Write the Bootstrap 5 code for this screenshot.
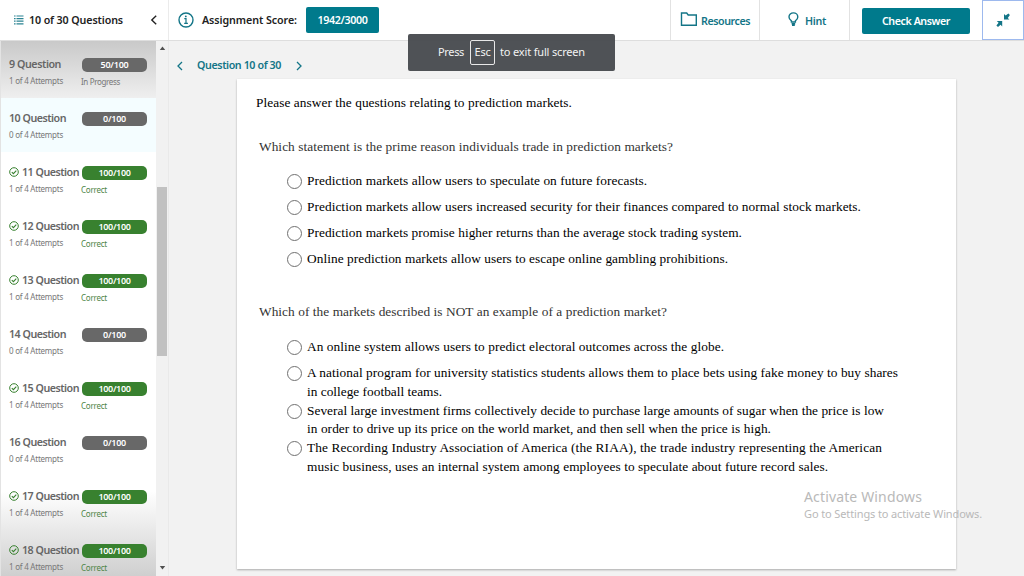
<!DOCTYPE html>
<html lang="en">

<head>
    <meta charset="UTF-8">
    <meta name="viewport" content="width=device-width, initial-scale=1.0">
    <title>Assignment</title>
    <link href="https://cdn.jsdelivr.net/npm/bootstrap@5.3.1/dist/css/bootstrap.min.css" rel="stylesheet">
    <style>
        :root {
            --teal: #007a8c;
        }

        body {
            height: 576px;
            font-family: "Noto Sans", "Open Sans", sans-serif;
            background-color: #f2f2f2;
            color: #222;
        }

        /* Top bar */
        .topbar {
            height: 41px;
            border-bottom: 1px solid #dedede;
            font-size: 10.7px;
            font-weight: 600;
            line-height: 16px;
        }

        .topbar > div {
            height: 40px;
        }

        .count-cell {
            width: 169px;
            padding-left: 14px;
            padding-right: 10px;
            border-right: 1px solid #ebebeb;
        }

        .count-text {
            margin-left: 5px;
        }

        .score-cell {
            padding-left: 9px;
        }

        .score-text {
            margin-left: 8px;
            width: 104px;
        }

        .score-box {
            width: 73px;
            height: 26px;
            line-height: 26px;
            border-radius: 2px;
            background-color: var(--teal);
        }

        .tool-cell {
            border-left: 1px solid #e2e2e2;
            color: #137587;
        }

        .tool-label {
            margin-top: 2px;
        }

        .resources-cell {
            width: 89px;
            padding-left: 9px;
        }

        .resources-cell .tool-label {
            margin-left: 3px;
        }

        .hint-cell {
            width: 90px;
            padding-left: 28px;
        }

        .hint-cell .tool-label {
            margin-left: 6px;
        }

        .check-cell {
            width: 133px;
            padding-left: 12px;
        }

        .btn-check-answer {
            width: 108px;
            height: 26px;
            padding: 0;
            margin-top: 2px;
            font-size: 10.7px;
            font-weight: 600;
            line-height: 26px;
            border: 0;
            border-radius: 2px;
            color: #fff;
            background-color: var(--teal);
        }

        .shrink-cell {
            width: 42px;
            border: 1px solid #9db9ee;
        }

        /* Question list */
        .side-panel {
            width: 169px;
            border-left: 1px solid #e3e3e3;
            border-right: 1px solid #e9e9e9;
        }

        .question-list {
            width: 155px;
            padding-top: 3px;
            background: linear-gradient(#c9c9c9, #efefef 57px, #fff 57px, #fff 450px, #cfcfcf);
        }

        .question-item {
            height: 54px;
            padding: 11px 9px 0 8px;
            flex-shrink: 0;
        }

        .question-item.active {
            background-color: #f4fdff;
        }

        .question-name {
            width: 73px;
            height: 18px;
            font-size: 10.7px;
            font-weight: 600;
            line-height: 19px;
            color: #666;
            white-space: nowrap;
        }

        .check-icon {
            margin: 0 3px 2px 0;
        }

        .score-pill {
            width: 65px;
            height: 14px;
            margin-top: 3px;
            border-radius: 5px;
            font-size: 9px;
            font-weight: 600;
            line-height: 14px;
            color: #fff;
            background-color: #686868;
        }

        .is-correct .score-pill {
            background-color: #38812f;
        }

        .question-note {
            font-size: 8px;
            line-height: 15px;
            color: #777;
        }

        .attempts {
            width: 72px;
        }

        .status-text {
            padding-top: 1px;
        }

        .is-correct .status-text {
            color: #4d8547;
        }

        .scroll-track {
            width: 12px;
            padding: 5px 1px 6px;
            background-color: #f1f1f1;
        }

        .scroll-thumb {
            width: 10px;
            height: 169px;
            margin-top: 137px;
            background-color: #c1c1c1;
        }

        /* Question area */
        .pager-row {
            height: 38px;
            padding: 11px 0 0 8px;
            font-size: 10.7px;
            font-weight: 600;
            color: #137587;
        }

        .pager-text {
            width: 84px;
            margin: 0 15px 0 14px;
            white-space: nowrap;
        }

        .sheet {
            width: 719px;
            height: 490px;
            margin-left: 68px;
            padding: 15px 19px;
            background-color: #fff;
            box-shadow: 0 1px 2px rgba(0, 0, 0, .3);
            font-family: "Liberation Serif", serif;
            font-size: 13.33px;
            line-height: 18.7px;
            color: #000;
        }

        .prompt {
            padding-left: 3px;
            color: #333;
        }

        .first-prompt {
            margin-top: 25px;
        }

        .second-prompt {
            margin-top: 27px;
        }

        .options {
            margin-top: 16px;
            padding-left: 31px;
        }

        .option {
            min-height: 26px;
        }

        .option .form-check-input {
            width: 15px;
            height: 15px;
            margin: 2px 5px 0 0;
            flex-shrink: 0;
            border: 1px solid #707070;
        }

        .option label {
            white-space: nowrap;
        }

        /* Overlays */
        .esc-toast {
            left: 408px;
            top: 34px;
            width: 207px;
            height: 37px;
            border-radius: 2px;
            background-color: rgba(70, 73, 77, .95);
            color: #f2f2f2;
            font-size: 11px;
            z-index: 5;
        }

        .esc-key {
            width: 25px;
            height: 25px;
            margin: 0 5px 0 6px;
            border: 1px solid #e8e8e8;
            border-radius: 2px;
            line-height: 22px;
        }

        .watermark {
            left: 804px;
            top: 487px;
            color: #b9b9b9;
            white-space: nowrap;
        }

        .watermark-title {
            font-size: 14px;
            line-height: 19px;
        }

        .watermark-text {
            font-size: 11px;
            line-height: 15px;
        }
    </style>
</head>

<body class="d-flex flex-column overflow-hidden position-relative">
    <header class="topbar d-flex bg-white flex-shrink-0">
        <div class="count-cell d-flex align-items-center">
            <svg width="10" height="10" viewBox="0 0 10 10" stroke="#2b8493" stroke-width="1.2">
                <path d="M0 1h1.6M0 3.6h1.6M0 6.2h1.6M0 8.8h1.6M2.5 1H9.5M2.5 3.6H9.5M2.5 6.2H9.5M2.5 8.8H9.5" />
            </svg>
            <span class="count-text text-nowrap"><span class="fit" data-width="94">10 of 30 Questions</span></span>
            <svg class="ms-auto" width="8" height="10" viewBox="0 0 8 10" fill="none" stroke="#222" stroke-width="1.4">
                <path d="M6.2 .8 1.8 5l4.4 4.2" />
            </svg>
        </div>
        <div class="score-cell d-flex align-items-center flex-grow-1">
            <svg width="16" height="16" viewBox="0 0 16 16" fill="none" stroke="#137587">
                <circle cx="8" cy="8" r="7" stroke-width="1.4" />
                <path d="M6.3 6.7H8v4.6M6.2 11.4h3.7" stroke-width="1.2" />
                <circle cx="7.8" cy="4.4" r=".9" fill="#137587" stroke="none" />
            </svg>
            <span class="score-text"><span class="fit" data-width="95">Assignment Score:</span></span>
            <div class="score-box text-white text-center"><span class="fit" data-width="50">1942/3000</span></div>
        </div>
        <div class="tool-cell resources-cell d-flex align-items-center">
            <svg width="18" height="16" viewBox="0 0 18 16" fill="none" stroke="#137587" stroke-width="1.4">
                <path d="M1.5 1h5.2l1.5 2h8.1v10.2H1.5z" />
            </svg>
            <span class="tool-label"><span class="fit" data-width="49">Resources</span></span>
        </div>
        <div class="tool-cell hint-cell d-flex align-items-center">
            <svg width="11" height="16" viewBox="0 0 11 16" fill="none" stroke="#137587" stroke-width="1.4">
                <path d="M3.4 10V8.8C1.9 7.8 1 6.7 1 5a4.4 4.1 0 0 1 8.8 0c0 1.7-.9 2.8-2.4 3.8V10zM3.6 11.7h3.6M4 13.3h2.8" />
            </svg>
            <span class="tool-label"><span class="fit" data-width="21">Hint</span></span>
        </div>
        <div class="tool-cell check-cell d-flex align-items-center">
            <button class="btn btn-check-answer"><span class="fit" data-width="68">Check Answer</span></button>
        </div>
        <div class="shrink-cell d-flex align-items-center justify-content-center">
            <svg width="14" height="14" viewBox="0 0 14 14" fill="#137587">
                <path d="M8 1v5.5h5.4L11.8 4.9 13.9 2 12.4.5 9.6 2.6zM.8 8h5.4v5.4L4.6 11.8 2 14 .4 12.4l2.2-2.6z" />
            </svg>
        </div>
    </header>

    <div class="d-flex flex-grow-1 overflow-hidden">
        <aside class="side-panel d-flex flex-shrink-0">
            <div class="question-list d-flex flex-column overflow-hidden" id="questionList">
                <!-- Questions will be added here by JavaScript -->
            </div>
            <div class="scroll-track d-flex flex-column align-items-center">
                <svg width="7" height="4" viewBox="0 0 7 4" fill="#505050"><path d="M.8 4 3.5.5 6.2 4z" /></svg>
                <div class="scroll-thumb"></div>
                <svg class="mt-auto" width="7" height="4" viewBox="0 0 7 4" fill="#505050"><path d="M.8 0 3.5 3.5 6.2 0z" /></svg>
            </div>
        </aside>

        <main class="flex-grow-1">
            <nav class="pager-row d-flex align-items-center">
                <svg width="6" height="10" viewBox="0 0 6 10" fill="none" stroke="#137587" stroke-width="1.3"><path d="M5 1 1 5l4 4" /></svg>
                <span class="pager-text"><span class="fit" data-width="84">Question 10 of 30</span></span>
                <svg width="6" height="10" viewBox="0 0 6 10" fill="none" stroke="#137587" stroke-width="1.3"><path d="m1 1 4 4-4 4" /></svg>
            </nav>
            <div class="sheet">
                <div><span class="fit" data-width="316">Please answer the questions relating to prediction markets.</span></div>

                <div class="prompt first-prompt"><span class="fit" data-width="414">Which statement is the prime reason individuals trade in prediction markets?</span></div>
                <div class="options">
                    <div class="option d-flex">
                        <input class="form-check-input" type="radio" name="q1" id="q1a">
                        <label for="q1a"><span class="fit" data-width="340">Prediction markets allow users to speculate on future forecasts.</span></label>
                    </div>
                    <div class="option d-flex">
                        <input class="form-check-input" type="radio" name="q1" id="q1b">
                        <label for="q1b"><span class="fit" data-width="554">Prediction markets allow users increased security for their finances compared to normal stock markets.</span></label>
                    </div>
                    <div class="option d-flex">
                        <input class="form-check-input" type="radio" name="q1" id="q1c">
                        <label for="q1c"><span class="fit" data-width="435">Prediction markets promise higher returns than the average stock trading system.</span></label>
                    </div>
                    <div class="option d-flex">
                        <input class="form-check-input" type="radio" name="q1" id="q1d">
                        <label for="q1d"><span class="fit" data-width="421">Online prediction markets allow users to escape online gambling prohibitions.</span></label>
                    </div>
                </div>

                <div class="prompt second-prompt"><span class="fit" data-width="408">Which of the markets described is NOT an example of a prediction market?</span></div>
                <div class="options">
                    <div class="option d-flex">
                        <input class="form-check-input" type="radio" name="q2" id="q2a">
                        <label for="q2a"><span class="fit" data-width="417">An online system allows users to predict electoral outcomes across the globe.</span></label>
                    </div>
                    <div class="option d-flex">
                        <input class="form-check-input" type="radio" name="q2" id="q2b">
                        <label for="q2b"><span class="fit" data-width="591">A national program for university statistics students allows them to place bets using fake money to buy shares</span><br><span class="fit" data-width="135">in college football teams.</span></label>
                    </div>
                    <div class="option d-flex">
                        <input class="form-check-input" type="radio" name="q2" id="q2c">
                        <label for="q2c"><span class="fit" data-width="577">Several large investment firms collectively decide to purchase large amounts of sugar when the price is low</span><br><span class="fit" data-width="464">in order to drive up its price on the world market, and then sell when the price is high.</span></label>
                    </div>
                    <div class="option d-flex">
                        <input class="form-check-input" type="radio" name="q2" id="q2d">
                        <label for="q2d"><span class="fit" data-width="575">The Recording Industry Association of America (the RIAA), the trade industry representing the American</span><br><span class="fit" data-width="521">music business, uses an internal system among employees to speculate about future record sales.</span></label>
                    </div>
                </div>
            </div>
        </main>
    </div>

    <div class="esc-toast position-absolute d-flex align-items-center justify-content-center">
        <span class="fit" data-width="26">Press</span>
        <span class="esc-key text-center"><span class="fit" data-width="16">Esc</span></span>
        <span class="fit" data-width="85">to exit full screen</span>
    </div>

    <div class="watermark position-absolute">
        <div class="watermark-title"><span class="fit" data-width="118">Activate Windows</span></div>
        <div class="watermark-text"><span class="fit" data-width="178">Go to Settings to activate Windows.</span></div>
    </div>

    <script src="https://cdn.jsdelivr.net/npm/bootstrap@5.3.1/dist/js/bootstrap.bundle.min.js"></script>
    <script>
        const questions = [
            { number: 9, score: 50, attempts: 1, status: 'In Progress' },
            { number: 10, score: 0, attempts: 0, active: true },
            { number: 11, score: 100, attempts: 1, status: 'Correct' },
            { number: 12, score: 100, attempts: 1, status: 'Correct' },
            { number: 13, score: 100, attempts: 1, status: 'Correct' },
            { number: 14, score: 0, attempts: 0 },
            { number: 15, score: 100, attempts: 1, status: 'Correct' },
            { number: 16, score: 0, attempts: 0 },
            { number: 17, score: 100, attempts: 1, status: 'Correct' },
            { number: 18, score: 100, attempts: 1, status: 'Correct' },
        ];

        const checkIcon = `<svg class="check-icon" width="10" height="10" viewBox="0 0 10 10" fill="none" stroke="#38812f">
            <circle cx="5" cy="5" r="4.3" stroke-width="1" /><path d="M2.8 5.1 4.4 6.7 7.3 3.6" stroke-width="1.1" /></svg>`;

        const questionList = document.getElementById('questionList');

        questions.forEach(q => {
            const correct = q.status === 'Correct';
            const item = document.createElement('div');
            item.className = 'question-item' + (q.active ? ' active' : '') + (correct ? ' is-correct' : '');
            item.innerHTML = `
                <div class="d-flex">
                    <div class="question-name">${correct ? checkIcon : ''}<span class="fit" data-width="${q.number === 9 ? 52 : 57}">${q.number} Question</span></div>
                    <div class="score-pill text-center"><span class="fit" data-width="${q.score === 100 ? 32 : q.score ? 28 : 23}">${q.score}/100</span></div>
                </div>
                <div class="d-flex question-note">
                    <div class="attempts"><span class="fit" data-width="54">${q.attempts} of 4 Attempts</span></div>
                    <div class="status-text">${q.status ? `<span class="fit" data-width="${correct ? 26 : 39}">${q.status}</span>` : ''}</div>
                </div>`;
            questionList.appendChild(item);
        });

        // Track each label so it fills its own measure
        document.querySelectorAll('.fit').forEach(label => {
            const width = label.getBoundingClientRect().width;
            const gap = (label.dataset.width - width) / label.textContent.length;
            label.style.letterSpacing = gap.toFixed(3) + 'px';
        });
    </script>
</body>

</html>
